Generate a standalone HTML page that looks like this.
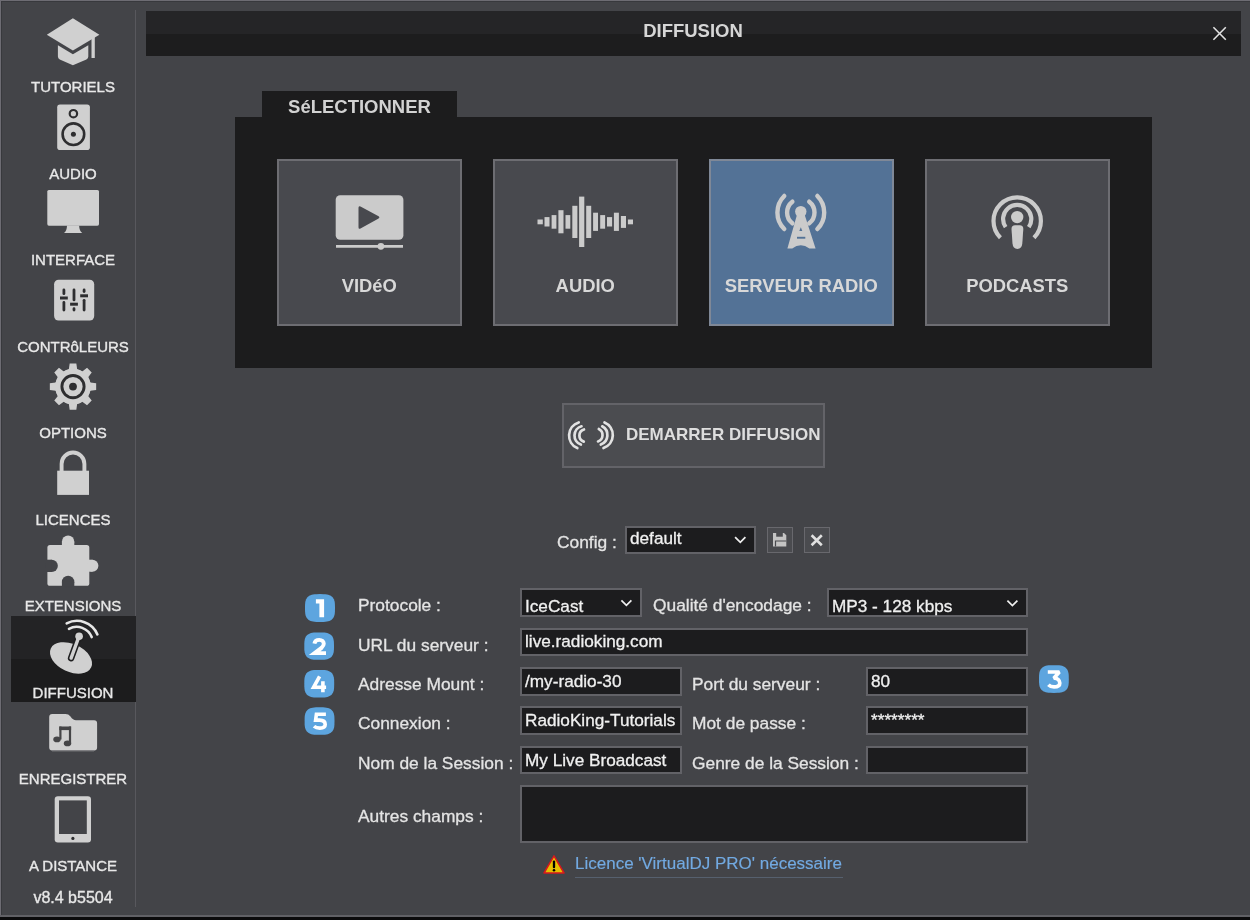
<!DOCTYPE html>
<html><head><meta charset="utf-8">
<style>
*{box-sizing:border-box;margin:0;padding:0}
html,body{width:1250px;height:920px;overflow:hidden;background:#434448;font-family:"Liberation Sans",sans-serif;}
.abs{position:absolute}
.side-lbl,.bl,.t,.lab,.lnk{will-change:transform}
#frame{position:absolute;left:0;top:0;width:1250px;height:920px;background:#434448}
.side-lbl{position:absolute;left:11px;width:124px;text-align:center;font-size:15px;color:#e8e8e8;white-space:nowrap;-webkit-text-stroke:0.35px #e8e8e8}
.bold{font-weight:bold}
.btn{position:absolute;top:158.5px;width:184.5px;height:167.5px;background:#48494e;border:2px solid #6d6d72}
.btn.sel{background:#537296;border-color:#7f8897}
.bl{position:absolute;text-align:center;font-size:18.4px;font-weight:bold;color:#d8d8d8;white-space:nowrap}
.inp{position:absolute;height:28px;background:#1c1c1e;border:2px solid #626267}
.t{position:absolute;font-size:17.2px;color:#f0f0f0;white-space:nowrap;-webkit-text-stroke:0.3px #f0f0f0}
.lab{position:absolute;font-size:17.35px;color:#e4e4e4;white-space:nowrap;-webkit-text-stroke:0.3px #e4e4e4}
.sbtn{position:absolute;top:527px;width:26.5px;height:25.7px;background:#4a4b4f;border:1.5px solid #68686d}
</style></head><body>
<div id="frame">
<div class="abs" style="left:0;top:0;width:1250px;height:1px;background:#6d6c73"></div>
<div class="abs" style="left:0;top:1px;width:1250px;height:1px;background:#38393d"></div>
<div class="abs" style="left:0;top:0;width:1px;height:917px;background:#6d6c73"></div>
<div class="abs" style="left:1px;top:1px;width:1px;height:915px;background:#38393d"></div>
<div class="abs" style="left:0;top:915px;width:1250px;height:2px;background:#616166"></div>
<div class="abs" style="left:0;top:917px;width:1250px;height:3px;background:#0b0b0c"></div>
<div class="abs" style="left:135px;top:10px;width:1px;height:897px;background:#58585d"></div>
<div class="abs" style="left:11px;top:616px;width:124.5px;height:86px;background:linear-gradient(#232325 0 50%,#1c1c1d 50% 100%)"></div>
<div class="side-lbl" style="top:78px">TUTORIELS</div>
<div class="side-lbl" style="top:165px">AUDIO</div>
<div class="side-lbl" style="top:251px">INTERFACE</div>
<div class="side-lbl" style="top:338px">CONTRôLEURS</div>
<div class="side-lbl" style="top:424px">OPTIONS</div>
<div class="side-lbl" style="top:511px">LICENCES</div>
<div class="side-lbl" style="top:597px">EXTENSIONS</div>
<div class="side-lbl" style="top:684px">DIFFUSION</div>
<div class="side-lbl" style="top:770px">ENREGISTRER</div>
<div class="side-lbl" style="top:857px">A DISTANCE</div>
<div class="side-lbl" style="top:889px;font-size:16px">v8.4 b5504</div>
<div class="abs" style="left:146px;top:10.5px;width:1094.5px;height:45.5px;background:linear-gradient(#252527 0 51%,#1d1d1e 51% 100%)"></div>
<div class="bl" style="left:146px;top:20px;width:1094px;font-size:18.5px;color:#d6d6d6">DIFFUSION</div>
<div class="abs" style="left:235px;top:116.5px;width:917px;height:251.5px;background:#1c1c1d"></div>
<div class="abs" style="left:261.5px;top:90.5px;width:195px;height:27px;background:#1c1c1d"></div>
<div class="bl" style="left:261.5px;top:96px;width:195px;font-size:18.5px;color:#d2d2d2">SéLECTIONNER</div>
<div class="btn" style="left:277px"></div>
<div class="bl" style="left:277px;top:274.5px;width:184.5px">VIDéO</div>
<div class="btn" style="left:493px"></div>
<div class="bl" style="left:493px;top:274.5px;width:184.5px">AUDIO</div>
<div class="btn sel" style="left:709px"></div>
<div class="bl" style="left:709px;top:274.5px;width:184.5px">SERVEUR RADIO</div>
<div class="btn" style="left:925px"></div>
<div class="bl" style="left:925px;top:274.5px;width:184.5px">PODCASTS</div>
<div class="abs" style="left:562px;top:402.5px;width:263px;height:65px;background:#4b4c50;border:2px solid #636368"></div>
<div class="bl" style="left:626px;top:425px;font-size:17px;color:#dedede">DEMARRER DIFFUSION</div>
<div class="lab" style="left:556.6px;top:532px">Config :</div>
<div class="inp" style="left:624.5px;top:525.5px;width:131.2px"></div><div class="t" style="left:629.5px;top:528.3px">default</div>
<div class="sbtn" style="left:766.5px"></div>
<div class="sbtn" style="left:803.5px"></div>
<div class="lab" style="left:358px;top:595.1px">Protocole :</div>
<div class="lab" style="left:358px;top:634.5px">URL du serveur :</div>
<div class="lab" style="left:358px;top:673.9px">Adresse Mount :</div>
<div class="lab" style="left:358px;top:713.3px">Connexion :</div>
<div class="lab" style="left:358px;top:752.7px">Nom de la Session :</div>
<div class="lab" style="left:653px;top:595.1px">Qualité d'encodage :</div>
<div class="lab" style="left:692px;top:673.9px">Port du serveur :</div>
<div class="lab" style="left:692px;top:713.3px">Mot de passe :</div>
<div class="lab" style="left:692px;top:752.7px">Genre de la Session :</div>
<div class="lab" style="left:358px;top:805.5px">Autres champs :</div>
<div class="inp" style="left:520.2px;top:588.1px;width:121.6px;height:28.8px"></div>
<div class="t" style="left:525.2px;top:595.7px">IceCast</div>
<div class="inp" style="left:826.5px;top:588.1px;width:201.5px;height:28.8px"></div>
<div class="t" style="left:831.5px;top:595.7px">MP3 - 128 kbps</div>
<div class="inp" style="left:520.2px;top:627.5px;width:507.8px;height:28.8px"></div>
<div class="t" style="left:525.2px;top:631.4px">live.radioking.com</div>
<div class="inp" style="left:520.2px;top:666.9px;width:161.5px;height:28.8px"></div>
<div class="t" style="left:525.2px;top:670.8px">/my-radio-30</div>
<div class="inp" style="left:866px;top:666.9px;width:162px;height:28.8px"></div>
<div class="t" style="left:871px;top:670.8px">80</div>
<div class="inp" style="left:520.2px;top:706.3px;width:161.5px;height:28.8px"></div>
<div class="t" style="left:525.2px;top:710.2px">RadioKing-Tutorials</div>
<div class="inp" style="left:866px;top:706.3px;width:162px;height:28.8px"></div>
<div class="t" style="left:871px;top:710.2px">********</div>
<div class="inp" style="left:520.2px;top:745.7px;width:161.5px;height:28.8px"></div>
<div class="t" style="left:525.2px;top:749.6px">My Live Broadcast</div>
<div class="inp" style="left:866px;top:745.7px;width:162px;height:28.8px"></div>
<div class="inp" style="left:520.2px;top:785px;width:507.8px;height:57.8px"></div>
<div class="abs lnk" style="left:575px;top:854px;font-size:17px;color:#72aae2;white-space:nowrap;-webkit-text-stroke:0.15px #72aae2">Licence 'VirtualDJ PRO' nécessaire</div>
<div class="abs" style="left:575px;top:876.5px;width:268px;height:1px;background:#56606e"></div>
<svg class="abs" style="left:0;top:0" width="1250" height="920" viewBox="0 0 1250 920">
<path d="M72.9,18.2 L99.4,34.7 L72.9,50.4 L46.8,34.7 Z" fill="#d0d0d0"/>
<path d="M57.9,45.3 L72.9,54.3 L88.3,45.3 L88.3,56.5 Q88.3,58.6 86.4,59.6 L72.9,65.3 L59.8,59.6 Q57.9,58.6 57.9,56.5 Z" fill="#d0d0d0"/>
<rect x="91.5" y="36.5" width="3.3" height="21.5" fill="#d0d0d0"/>
<rect x="57.2" y="104.5" width="32.7" height="45.6" rx="2.8" fill="#d0d0d0"/>
<circle cx="73.4" cy="113.7" r="3.7" fill="none" stroke="#2e2e30" stroke-width="2.2"/>
<circle cx="73.4" cy="134.2" r="10.8" fill="none" stroke="#2e2e30" stroke-width="2.6"/>
<circle cx="73.4" cy="134.2" r="2.5" fill="#2e2e30"/>
<rect x="47.3" y="189.9" width="51.7" height="35.8" rx="1.6" fill="#d0d0d0"/>
<path d="M67,225.5 L79.1,225.5 Q79.3,231 82.2,233 L64,233 Q66.9,231 67,225.5 Z" fill="#d0d0d0"/>
<rect x="54.1" y="279.8" width="40.1" height="40.8" rx="4.5" fill="#d0d0d0"/>
<line x1="63.9" y1="290" x2="63.9" y2="293.7" stroke="#2e2e30" stroke-width="2.8" stroke-linecap="round"/>
<line x1="63.9" y1="302.5" x2="63.9" y2="310" stroke="#2e2e30" stroke-width="2.8" stroke-linecap="round"/>
<rect x="60.0" y="296.5" width="7.8" height="3" fill="#2e2e30"/>
<line x1="74.0" y1="290" x2="74.0" y2="299.9" stroke="#2e2e30" stroke-width="2.8" stroke-linecap="round"/>
<line x1="74.0" y1="308.7" x2="74.0" y2="310" stroke="#2e2e30" stroke-width="2.8" stroke-linecap="round"/>
<rect x="70.1" y="302.7" width="7.8" height="3" fill="#2e2e30"/>
<line x1="84.1" y1="290" x2="84.1" y2="291.5" stroke="#2e2e30" stroke-width="2.8" stroke-linecap="round"/>
<line x1="84.1" y1="300.3" x2="84.1" y2="310" stroke="#2e2e30" stroke-width="2.8" stroke-linecap="round"/>
<rect x="80.2" y="294.3" width="7.8" height="3" fill="#2e2e30"/>
<path d="M68.84,369.29 L69.66,363.44 L76.34,363.44 L77.16,369.29 L82.30,371.42 L87.02,367.86 L91.74,372.58 L88.18,377.30 L90.31,382.44 L96.16,383.26 L96.16,389.94 L90.31,390.76 L88.18,395.90 L91.74,400.62 L87.02,405.34 L82.30,401.78 L77.16,403.91 L76.34,409.76 L69.66,409.76 L68.84,403.91 L63.70,401.78 L58.98,405.34 L54.26,400.62 L57.82,395.90 L55.69,390.76 L49.84,389.94 L49.84,383.26 L55.69,382.44 L57.82,377.30 L54.26,372.58 L58.98,367.86 L63.70,371.42 Z" fill="#d0d0d0"/>
<circle cx="73" cy="386.6" r="17.9" fill="#d0d0d0"/>
<circle cx="73" cy="386.6" r="11.1" fill="none" stroke="#2e2e30" stroke-width="2.9"/>
<circle cx="73" cy="386.6" r="3.9" fill="#2e2e30"/>
<path d="M61.6,471 L61.6,463.9 A11.4,11.4 0 0 1 84.4,463.9 L84.4,471" fill="none" stroke="#d0d0d0" stroke-width="3.9"/>
<rect x="57.2" y="470.7" width="31.8" height="24.2" fill="#d0d0d0"/>
<rect x="47.4" y="545" width="41.9" height="40.8" rx="2.6" fill="#d0d0d0"/>
<circle cx="68.1" cy="541.7" r="6.2" fill="#d0d0d0"/><rect x="61.9" y="541.7" width="12.4" height="4" fill="#d0d0d0"/>
<circle cx="92.4" cy="565.7" r="6" fill="#d0d0d0"/><rect x="88" y="559.7" width="4.4" height="12" fill="#d0d0d0"/>
<circle cx="51.7" cy="565.85" r="6.15" fill="#434448"/><rect x="46" y="559.7" width="5.7" height="12.3" fill="#434448"/>
<circle cx="68.1" cy="581.9" r="6.2" fill="#434448"/><rect x="61.9" y="581.9" width="12.4" height="5" fill="#434448"/>
<ellipse cx="71" cy="657.9" rx="22.3" ry="13.9" transform="rotate(25 71 657.9)" fill="#d0d0d0"/>
<line x1="71.1" y1="658.1" x2="79.1" y2="636.2" stroke="#1f1f20" stroke-width="6.5" stroke-linecap="round"/>
<circle cx="79.1" cy="636.2" r="5.4" fill="#1f1f20"/>
<line x1="71.1" y1="658.1" x2="79.1" y2="636.2" stroke="#d0d0d0" stroke-width="3.4" stroke-linecap="round"/>
<circle cx="79.1" cy="636.2" r="3.8" fill="#d0d0d0"/>
<path d="M66.7,623.4 A22.2,22.2 0 0 1 97.4,634.4" fill="none" stroke="#e6e6e6" stroke-width="2.6" stroke-linecap="round"/>
<path d="M69,628.8 A16.2,16.2 0 0 1 91.7,637.1" fill="none" stroke="#e6e6e6" stroke-width="2.6" stroke-linecap="round"/>
<path d="M52.2,714.1 L65.5,714.1 Q68.5,714.1 70.5,716.5 Q73,720.3 76,720.3 L94.1,720.3 Q97.1,720.3 97.1,723.3 L97.1,747.5 Q97.1,750.5 94.1,750.5 L52.2,750.5 Q49.2,750.5 49.2,747.5 L49.2,717.1 Q49.2,714.1 52.2,714.1 Z" fill="#d0d0d0"/>
<rect x="52" y="750.5" width="42" height="1.5" fill="#6a6a6e" opacity="0.6"/>
<rect x="59.3" y="726.5" width="11.8" height="3.6" fill="#454547"/>
<rect x="59.3" y="726.5" width="2.2" height="13" fill="#454547"/>
<rect x="68.9" y="726.5" width="2.2" height="17" fill="#454547"/>
<ellipse cx="57" cy="739.4" rx="3.7" ry="2.8" fill="#454547"/>
<ellipse cx="67.5" cy="743.4" rx="3.7" ry="2.8" fill="#454547"/>
<rect x="54.7" y="796.2" width="36.3" height="46.3" rx="3.2" fill="#d0d0d0"/>
<rect x="59" y="800.4" width="27.8" height="33.6" fill="#434448"/>
<circle cx="72.9" cy="838.4" r="1.6" fill="#2e2e30"/>
<path d="M1213.4,27.3 L1225.8,39.7 M1225.8,27.3 L1213.4,39.7" stroke="#e2e2e2" stroke-width="1.6"/>
<rect x="335.7" y="195.3" width="67.7" height="44.5" rx="4.5" fill="#cbcbcb"/>
<path d="M360.5,206.6 Q358.5,205.5 358.5,207.8 L358.5,227.2 Q358.5,229.5 360.5,228.4 L378.6,218.5 Q380.4,217.4 378.6,216.3 Z" fill="#48494e"/>
<line x1="336" y1="246.3" x2="403" y2="246.3" stroke="#cbcbcb" stroke-width="2.7"/>
<circle cx="380.9" cy="246.3" r="3.4" fill="#cbcbcb"/>
<rect x="537.5" y="219.5" width="5.30" height="4.80" fill="#cbcbcb"/>
<rect x="544.5" y="217.1" width="5.00" height="9.40" fill="#cbcbcb"/>
<rect x="551.6" y="215.1" width="4.80" height="13.60" fill="#cbcbcb"/>
<rect x="558.4" y="210.2" width="5.10" height="23.10" fill="#cbcbcb"/>
<rect x="565.5" y="215.1" width="4.80" height="13.60" fill="#cbcbcb"/>
<rect x="572.3" y="205.8" width="5.10" height="32.20" fill="#cbcbcb"/>
<rect x="579.1" y="196.6" width="5.20" height="50.40" fill="#cbcbcb"/>
<rect x="586.2" y="205.8" width="5.00" height="32.20" fill="#cbcbcb"/>
<rect x="593.1" y="212.7" width="4.90" height="18.20" fill="#cbcbcb"/>
<rect x="600.2" y="215.1" width="4.90" height="13.60" fill="#cbcbcb"/>
<rect x="607" y="217.1" width="5.10" height="9.40" fill="#cbcbcb"/>
<rect x="613.9" y="212.7" width="5.00" height="18.20" fill="#cbcbcb"/>
<rect x="620.9" y="216" width="5.10" height="11.90" fill="#cbcbcb"/>
<rect x="627.9" y="219.5" width="5.10" height="4.80" fill="#cbcbcb"/>
<path d="M792.37,201.70 A13.7,13.7 0 0 0 792.37,223.30" fill="none" stroke="#cbcbcb" stroke-width="4.4" stroke-linecap="round"/>
<path d="M809.23,201.70 A13.7,13.7 0 0 1 809.23,223.30" fill="none" stroke="#cbcbcb" stroke-width="4.4" stroke-linecap="round"/>
<path d="M784.25,195.95 A23.4,23.4 0 0 0 784.25,229.05" fill="none" stroke="#cbcbcb" stroke-width="4.4" stroke-linecap="round"/>
<path d="M817.35,195.95 A23.4,23.4 0 0 1 817.35,229.05" fill="none" stroke="#cbcbcb" stroke-width="4.4" stroke-linecap="round"/>
<circle cx="800.8" cy="211.6" r="5.7" fill="#cbcbcb"/>
<path d="M797.2,214 L804.4,214 L815.6,248.5 L809.4,248.5 Q800.8,242 792.2,248.5 L787.4,248.5 Z" fill="#cbcbcb"/>
<path d="M800.8,227.3 L802.3,231 L799.3,231 Z" fill="#537296"/>
<rect x="797" y="236.8" width="8.3" height="1.9" fill="#537296"/>
<path d="M1000.44,237.76 A23.7,23.7 0 1 1 1033.96,237.76" fill="none" stroke="#cbcbcb" stroke-width="4.2"/>
<path d="M1005.65,227.09 A14.1,14.1 0 1 1 1028.75,227.09" fill="none" stroke="#cbcbcb" stroke-width="4.2"/>
<circle cx="1017.2" cy="217.1" r="6.2" fill="#cbcbcb"/>
<path d="M1011.5,229 Q1011.5,225.3 1015,225.3 L1019.8,225.3 Q1023.3,225.3 1023.3,229 L1022.3,243.5 Q1021.8,248.9 1017.4,248.9 Q1013,248.9 1012.5,243.5 Z" fill="#cbcbcb"/>
<path d="M578.7,422.5 A13.68,13.68 0 0 0 577.3,448.1" fill="none" stroke="#e2e2e2" stroke-width="2.7" stroke-linecap="round"/>
<path d="M581.5,426.3 A9.60,9.60 0 0 0 580.9,444.6" fill="none" stroke="#e2e2e2" stroke-width="2.7" stroke-linecap="round"/>
<path d="M584,429.5 A6.32,6.32 0 0 0 583.8,441.6" fill="none" stroke="#e2e2e2" stroke-width="2.7" stroke-linecap="round"/>
<path d="M604.5,422.5 A13.65,13.65 0 0 1 603.5,448" fill="none" stroke="#e2e2e2" stroke-width="2.7" stroke-linecap="round"/>
<path d="M602.2,426.3 A10.10,10.10 0 0 1 600.8,444.6" fill="none" stroke="#e2e2e2" stroke-width="2.7" stroke-linecap="round"/>
<path d="M598.8,429 A6.75,6.75 0 0 1 598,441.4" fill="none" stroke="#e2e2e2" stroke-width="2.7" stroke-linecap="round"/>
<path d="M735.1,537.2 L740.3,542.3 L745.4,537.2" fill="none" stroke="#eeeeee" stroke-width="1.8"/>
<path d="M773,533 L784,533 L786.3,535.3 L786.3,546.4 L773,546.4 Z" fill="#c4c4c4"/>
<rect x="776.2" y="532.8" width="6.6" height="3.9" fill="#4a4b4f"/>
<path d="M775.5,546.4 L775.5,541 L786.3,541" fill="none" stroke="#4a4b4f" stroke-width="1.2"/>
<path d="M811.6,535.2 L821.8,545.2 M821.8,535.2 L811.6,545.2" stroke="#e0e0e0" stroke-width="2.6"/>
<path d="M621.4,600.4 L626.4,605.4 L631.4,600.4" fill="none" stroke="#f0f0f0" stroke-width="1.7"/>
<path d="M1007.4,600.6 L1012.4,605.6 L1017.4,600.6" fill="none" stroke="#f0f0f0" stroke-width="1.7"/>
<path d="M554,855.8 L564,873 L544,873 Z" fill="#e6bf00" stroke="#d8181c" stroke-width="1.5" stroke-linejoin="round"/>
<line x1="554" y1="861.6" x2="554" y2="867.2" stroke="#000" stroke-width="2.3" stroke-linecap="round"/><circle cx="554" cy="870.3" r="1.25" fill="#000"/>
<path d="M335.00,608.05 L334.95,611.32 L334.82,613.07 L334.59,614.49 L334.28,615.70 L333.87,616.77 L333.37,617.71 L332.77,618.55 L332.08,619.28 L331.29,619.93 L330.39,620.48 L329.37,620.95 L328.23,621.33 L326.92,621.62 L325.40,621.83 L323.51,621.96 L320.00,622.00 L316.49,621.96 L314.60,621.83 L313.08,621.62 L311.77,621.33 L310.63,620.95 L309.61,620.48 L308.71,619.93 L307.92,619.28 L307.23,618.55 L306.63,617.71 L306.13,616.77 L305.72,615.70 L305.41,614.49 L305.18,613.07 L305.05,611.32 L305.00,608.05 L305.05,604.78 L305.18,603.03 L305.41,601.61 L305.72,600.40 L306.13,599.33 L306.63,598.39 L307.23,597.55 L307.92,596.82 L308.71,596.17 L309.61,595.62 L310.63,595.15 L311.77,594.77 L313.08,594.48 L314.60,594.27 L316.49,594.14 L320.00,594.10 L323.51,594.14 L325.40,594.27 L326.92,594.48 L328.23,594.77 L329.37,595.15 L330.39,595.62 L331.29,596.17 L332.08,596.82 L332.77,597.55 L333.37,598.39 L333.87,599.33 L334.28,600.40 L334.59,601.61 L334.82,603.03 L334.95,604.78 Z" fill="#5da5df"/>
<path d="M334.00,646.10 L333.96,649.31 L333.82,651.03 L333.60,652.42 L333.28,653.62 L332.88,654.66 L332.38,655.59 L331.79,656.41 L331.11,657.13 L330.32,657.76 L329.43,658.31 L328.43,658.77 L327.30,659.14 L326.00,659.43 L324.50,659.63 L322.63,659.76 L319.15,659.80 L315.67,659.76 L313.80,659.63 L312.30,659.43 L311.00,659.14 L309.87,658.77 L308.87,658.31 L307.98,657.76 L307.19,657.13 L306.51,656.41 L305.92,655.59 L305.42,654.66 L305.02,653.62 L304.70,652.42 L304.48,651.03 L304.34,649.31 L304.30,646.10 L304.34,642.89 L304.48,641.17 L304.70,639.78 L305.02,638.58 L305.42,637.54 L305.92,636.61 L306.51,635.79 L307.19,635.07 L307.98,634.44 L308.87,633.89 L309.87,633.43 L311.00,633.06 L312.30,632.77 L313.80,632.57 L315.67,632.44 L319.15,632.40 L322.63,632.44 L324.50,632.57 L326.00,632.77 L327.30,633.06 L328.43,633.43 L329.43,633.89 L330.32,634.44 L331.11,635.07 L331.79,635.79 L332.38,636.61 L332.88,637.54 L333.28,638.58 L333.60,639.78 L333.82,641.17 L333.96,642.89 Z" fill="#5da5df"/>
<path d="M334.20,683.75 L334.15,686.99 L334.02,688.74 L333.79,690.14 L333.48,691.35 L333.07,692.41 L332.57,693.34 L331.98,694.17 L331.29,694.90 L330.50,695.54 L329.60,696.09 L328.59,696.55 L327.45,696.93 L326.15,697.22 L324.63,697.43 L322.75,697.56 L319.25,697.60 L315.75,697.56 L313.87,697.43 L312.35,697.22 L311.05,696.93 L309.91,696.55 L308.90,696.09 L308.00,695.54 L307.21,694.90 L306.52,694.17 L305.93,693.34 L305.43,692.41 L305.02,691.35 L304.71,690.14 L304.48,688.74 L304.35,686.99 L304.30,683.75 L304.35,680.51 L304.48,678.76 L304.71,677.36 L305.02,676.15 L305.43,675.09 L305.93,674.16 L306.52,673.33 L307.21,672.60 L308.00,671.96 L308.90,671.41 L309.91,670.95 L311.05,670.57 L312.35,670.28 L313.87,670.07 L315.75,669.94 L319.25,669.90 L322.75,669.94 L324.63,670.07 L326.15,670.28 L327.45,670.57 L328.59,670.95 L329.60,671.41 L330.50,671.96 L331.29,672.60 L331.98,673.33 L332.57,674.16 L333.07,675.09 L333.48,676.15 L333.79,677.36 L334.02,678.76 L334.15,680.51 Z" fill="#5da5df"/>
<path d="M334.50,721.05 L334.45,724.27 L334.32,726.00 L334.09,727.40 L333.78,728.59 L333.37,729.64 L332.87,730.57 L332.28,731.40 L331.59,732.12 L330.80,732.76 L329.90,733.30 L328.89,733.76 L327.75,734.14 L326.45,734.43 L324.93,734.63 L323.05,734.76 L319.55,734.80 L316.05,734.76 L314.17,734.63 L312.65,734.43 L311.35,734.14 L310.21,733.76 L309.20,733.30 L308.30,732.76 L307.51,732.12 L306.82,731.40 L306.23,730.57 L305.73,729.64 L305.32,728.59 L305.01,727.40 L304.78,726.00 L304.65,724.27 L304.60,721.05 L304.65,717.83 L304.78,716.10 L305.01,714.70 L305.32,713.51 L305.73,712.46 L306.23,711.53 L306.82,710.70 L307.51,709.98 L308.30,709.34 L309.20,708.80 L310.21,708.34 L311.35,707.96 L312.65,707.67 L314.17,707.47 L316.05,707.34 L319.55,707.30 L323.05,707.34 L324.93,707.47 L326.45,707.67 L327.75,707.96 L328.89,708.34 L329.90,708.80 L330.80,709.34 L331.59,709.98 L332.28,710.70 L332.87,711.53 L333.37,712.46 L333.78,713.51 L334.09,714.70 L334.32,716.10 L334.45,717.83 Z" fill="#5da5df"/>
<path d="M1068.80,679.05 L1068.76,682.29 L1068.62,684.04 L1068.40,685.44 L1068.08,686.65 L1067.67,687.71 L1067.18,688.64 L1066.59,689.47 L1065.90,690.20 L1065.11,690.84 L1064.22,691.39 L1063.21,691.85 L1062.07,692.23 L1060.78,692.52 L1059.27,692.73 L1057.39,692.86 L1053.90,692.90 L1050.41,692.86 L1048.53,692.73 L1047.02,692.52 L1045.73,692.23 L1044.59,691.85 L1043.58,691.39 L1042.69,690.84 L1041.90,690.20 L1041.21,689.47 L1040.62,688.64 L1040.13,687.71 L1039.72,686.65 L1039.40,685.44 L1039.18,684.04 L1039.04,682.29 L1039.00,679.05 L1039.04,675.81 L1039.18,674.06 L1039.40,672.66 L1039.72,671.45 L1040.13,670.39 L1040.62,669.46 L1041.21,668.63 L1041.90,667.90 L1042.69,667.26 L1043.58,666.71 L1044.59,666.25 L1045.73,665.87 L1047.02,665.58 L1048.53,665.37 L1050.41,665.24 L1053.90,665.20 L1057.39,665.24 L1059.27,665.37 L1060.78,665.58 L1062.07,665.87 L1063.21,666.25 L1064.22,666.71 L1065.11,667.26 L1065.90,667.90 L1066.59,668.63 L1067.18,669.46 L1067.67,670.39 L1068.08,671.45 L1068.40,672.66 L1068.62,674.06 L1068.76,675.81 Z" fill="#5da5df"/>
<path d="M315.9,599.3 L324.1,599.3 L324.1,617.2 L319.4,617.2 L319.4,603.4 L315.9,603.4 Z" fill="#ffffff"/>
<path d="M314.4,643.6 C314.9,640.6 316.9,639.9 319.2,639.9 C322.1,639.9 323.8,641.6 323.8,643.8 C323.8,645.3 323,646.4 321.5,647.9 L314.6,653.1 L326,653.1" fill="none" stroke="#ffffff" stroke-width="3.9" stroke-linejoin="miter"/>
<path d="M1047.8,672 L1059.3,672 L1053.8,678.2 C1057.8,678 1059.8,680.3 1059.8,683 C1059.8,686 1057.3,686.9 1054,686.9 C1051.6,686.9 1049.7,686.2 1048.4,684.8" fill="none" stroke="#ffffff" stroke-width="3.7" stroke-linejoin="bevel"/>
<path d="M319.6,676.3 L313.6,687.3 L326.1,687.3 M322.9,681.2 L322.9,692.3" fill="none" stroke="#ffffff" stroke-width="3.6"/>
<path d="M325.9,714.2 L316.4,714.2 L315.6,720.1 L319.6,720.1 C323.6,720.1 325.2,722 325.2,724.5 C325.2,727.3 322.8,728.1 319.8,728.1 C317.4,728.1 315.3,727.4 314,726.2" fill="none" stroke="#ffffff" stroke-width="3.6" stroke-linejoin="miter"/>
</svg>
</div>
</body></html>
